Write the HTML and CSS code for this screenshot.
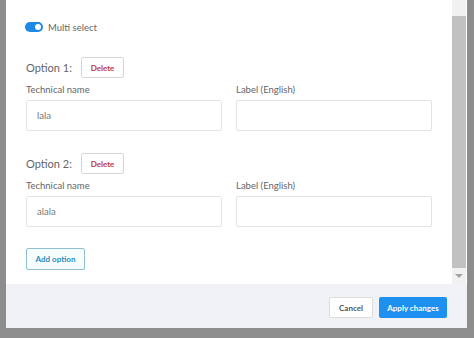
FILE: index.html
```html
<!DOCTYPE html>
<html lang="en">
<head>
    <meta charset="UTF-8">
    <meta name="viewport" content="width=device-width, initial-scale=1.0">
    <title>Options</title>
    <link rel="stylesheet" href="styles.css">
</head>
<body>

    <div class="modal">
        <div class="modal-body">
            <div class="content">
                <div class="toggle-row">
                    <span class="toggle"><span class="knob"></span></span>
                    <span class="toggle-label">Multi select</span>
                </div>

                <div class="option">
                    <div class="option-head">
                        <span class="option-title">Option 1:</span>
                        <button class="btn-delete">Delete</button>
                    </div>
                    <div class="fields">
                        <div class="field">
                            <label>Technical name</label>
                            <input type="text" value="lala">
                        </div>
                        <div class="field">
                            <label>Label (English)</label>
                            <input type="text" value="">
                        </div>
                    </div>
                </div>

                <div class="option">
                    <div class="option-head">
                        <span class="option-title">Option 2:</span>
                        <button class="btn-delete">Delete</button>
                    </div>
                    <div class="fields">
                        <div class="field">
                            <label>Technical name</label>
                            <input type="text" value="alala">
                        </div>
                        <div class="field">
                            <label>Label (English)</label>
                            <input type="text" value="">
                        </div>
                    </div>
                </div>

                <button class="btn-add">Add option</button>
            </div>

            <div class="scrollbar">
                <div class="thumb"></div>
                <div class="arrow"></div>
            </div>
        </div>

        <div class="modal-footer">
            <button class="btn-cancel">Cancel</button>
            <button class="btn-apply">Apply changes</button>
        </div>
    </div>

</body>
</html>
```

FILE: styles.css
```css
body {
    margin: 0;
    background-color: #8d8d8d;
    font-family: Lato, "Liberation Sans", sans-serif;
    height: 338px;
    overflow: hidden;
}

.modal {
    margin: 0 7px 0 6px;
    height: 328px;
    display: flex;
    flex-direction: column;
    background-color: #fff;
}

.modal-body {
    height: 284px;
    display: flex;
}

.content {
    flex: 1;
    padding: 22px 20px 0 20px;
}

.toggle-row {
    display: flex;
    align-items: center;
    height: 10px;
    margin-left: -1px;
}

.toggle {
    width: 18px;
    height: 10px;
    border-radius: 5px;
    background-color: #1e88e5;
    position: relative;
}

.knob {
    position: absolute;
    right: 2px;
    top: 2px;
    width: 6px;
    height: 6px;
    border-radius: 50%;
    background-color: #fff;
}

.toggle-label {
    margin-left: 5px;
    font-size: 9.5px;
    color: #666;
}

.option {
    margin-top: 25px;
}

.option + .option {
    margin-top: 22px;
}

.option-head {
    display: flex;
    align-items: center;
    height: 21px;
}

.option-title {
    width: 55px;
    font-size: 11px;
    color: #666;
}

.btn-delete {
    width: 43px;
    height: 21px;
    padding: 0;
    border: 1px solid #d6d6d6;
    border-radius: 2px;
    background-color: #fff;
    color: #c0394b;
    font-family: inherit;
    font-size: 8px;
    font-weight: bold;
}

.fields {
    display: flex;
    gap: 14px;
}

.field {
    flex: 1;
    display: flex;
    flex-direction: column;
}

.field label {
    margin-top: 6px;
    height: 12px;
    line-height: 12px;
    font-size: 9.5px;
    color: #666;
}

.field input {
    margin-top: 4px;
    height: 31px;
    box-sizing: border-box;
    border: 1px solid #e3e3e3;
    border-radius: 2px;
    padding: 0 10px;
    font-family: inherit;
    font-size: 9.5px;
    color: #777;
    outline: none;
}

.btn-add {
    margin-top: 21px;
    width: 59px;
    height: 22px;
    padding: 0;
    border: 1px solid #8fbfd0;
    border-radius: 2px;
    background-color: #f7fcfd;
    color: #2a8bbf;
    font-family: inherit;
    font-size: 8px;
    font-weight: bold;
}

.scrollbar {
    width: 14px;
    margin-right: 1px;
    background-color: #f1f1f1;
    display: flex;
    flex-direction: column;
    padding-top: 16px;
    box-sizing: border-box;
}

.thumb {
    height: 252px;
    background-color: #c1c1c1;
}

.arrow {
    margin: 6px auto 0 auto;
    width: 0;
    height: 0;
    border-left: 4px solid transparent;
    border-right: 4px solid transparent;
    border-top: 4px solid #a3a3a3;
}

.modal-footer {
    flex: 1;
    background-color: #f1f2f6;
    display: flex;
    justify-content: flex-end;
    align-items: flex-start;
    padding: 13px 20px 0 0;
    gap: 6px;
}

.btn-cancel {
    width: 44px;
    height: 21px;
    padding: 0;
    border: 1px solid #dcdcdc;
    border-radius: 2px;
    background-color: #fff;
    color: #555;
    font-family: inherit;
    font-size: 8px;
    font-weight: bold;
}

.btn-apply {
    width: 68px;
    height: 21px;
    padding: 0;
    border: none;
    border-radius: 2px;
    background-color: #1e90f0;
    color: #fff;
    font-family: inherit;
    font-size: 8px;
    font-weight: bold;
}
```
